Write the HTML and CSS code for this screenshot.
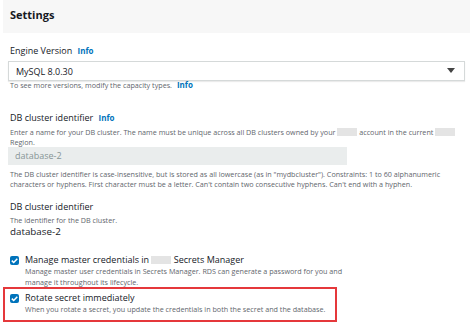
FILE: index.html
```html
<!DOCTYPE html>
<html lang="en">
<head>
  <meta charset="UTF-8" />
  <title>Settings</title>
  <link rel="stylesheet" href="styles.css">
</head>
<body>
  <div class="panel">
    <div class="panel-head"><h2>Settings</h2></div>
    <div class="panel-body">
      <div class="field engine">
        <div class="label">Engine Version <a class="info">Info</a></div>
        <div class="select">
          <span>MySQL 8.0.30</span>
          <svg class="caret" width="8" height="6" viewBox="0 0 8 6"><path d="M0 0h8L4 5z" fill="#444"/></svg>
        </div>
        <div class="hint">To see more versions, modify the capacity types. <a class="info">Info</a></div>
      </div>

      <div class="field cluster">
        <div class="label">DB cluster identifier <a class="info">Info</a></div>
        <div class="desc">Enter a name for your DB cluster. The name must be unique across all DB clusters owned by your <span class="redact"></span> account in the current <span class="redact"></span> Region.</div>
        <div class="input disabled">database-2</div>
        <div class="hint">The DB cluster identifier is case-insensitive, but is stored as all lowercase (as in "mydbcluster"). Constraints: 1 to 60 alphanumeric characters or hyphens. First character must be a letter. Can't contain two consecutive hyphens. Can't end with a hyphen.</div>
      </div>

      <div class="field readonly">
        <div class="label">DB cluster identifier</div>
        <div class="desc">The identifier for the DB cluster.</div>
        <div class="value">database-2</div>
      </div>

      <div class="check manage">
        <span class="box"><svg width="9" height="9" viewBox="0 0 9 9"><path d="M1.8 4.6l1.9 1.9 3.6-3.8" fill="none" stroke="#fff" stroke-width="1.5"/></svg></span>
        <div>
          <div class="check-label">Manage master credentials in <span class="redact"></span> Secrets Manager</div>
          <div class="desc">Manage master user credentials in Secrets Manager. RDS can generate a password for you and manage it throughout its lifecycle.</div>
        </div>
      </div>

      <div class="check rotate">
        <span class="box"><svg width="9" height="9" viewBox="0 0 9 9"><path d="M1.8 4.6l1.9 1.9 3.6-3.8" fill="none" stroke="#fff" stroke-width="1.5"/></svg></span>
        <div>
          <div class="check-label">Rotate secret immediately</div>
          <div class="desc">When you rotate a secret, you update the credentials in both the secret and the database.</div>
        </div>
      </div>
    </div>
  </div>
</body>
</html>
```
FILE: styles.css
```css
* { box-sizing: border-box; margin: 0; padding: 0; }
body {
  background: #fff;
  font-family: 'Open Sans', 'Noto Sans', sans-serif;
  color: #16191f;
  width: 474px; height: 328px;
  overflow: hidden;
}
.panel { padding: 0 4px 0 3px; }
.panel-head {
  background: #f7f7f7;
  height: 33px;
  padding: 7px 7px 0;
}
.panel-head h2 { font-size: 11px; font-weight: 700; line-height: 16px; }
.panel-body { padding: 0 5px 0 5px; }
.label { font-size: 9px; line-height: 12px; color: #16191f; padding-left: 2px; }
.info { color: #0073bb; font-weight: 700; font-size: 8px; margin-left: 3px; }
.desc, .hint {
  font-size: 7.2px; line-height: 10.5px; color: #5f666d; padding-left: 2px;
}
.engine { margin-top: 12px; }
.select {
  margin-top: 4px;
  height: 20px;
  border: 1px solid #d5d9d9;
  display: flex; align-items: center; justify-content: space-between;
  padding: 0 7px 0 7px;
  font-size: 9px;
  box-shadow: 0 1px 1px rgba(0,0,0,0.08);
}
.caret { margin-right: 2px; }
.engine .hint { margin-top: -1px; }
.cluster { margin-top: 21px; }
.cluster .desc { margin-top: 3px; }
.input {
  width: 339px; height: 18px; margin-top: -1px;
  display: flex; align-items: center;
  padding: 0 7px; font-size: 9px;
}
.input.disabled { background: #eaeded; color: #879596; }
.cluster .hint { margin-top: 4px; padding-right: 10px; }
.redact {
  display: inline-block; width: 20px; height: 8px;
  background: #e4e4e4; vertical-align: -1px;
}
.readonly { margin-top: 11px; }
.readonly .desc { margin-top: 2px; }
.value { font-size: 9.8px; line-height: 12px; margin-top: 1px; padding-left: 2px; }
.check { display: flex; gap: 6px; }
.check .box {
  flex: 0 0 9px; width: 9px; height: 9px; margin-top: 2px;
  background: #0073bb; border-radius: 2px;
  display: flex; align-items: center; justify-content: center;
}
.check-label { font-size: 9px; line-height: 12px; }
.check .desc { padding-left: 0; }
.manage { margin-top: 16px; padding-left: 2px; padding-right: 120px; }
.rotate {
  margin: 0 0 0 -5px;
  width: 334px; height: 35px;
  border: 2px solid #e5383b;
  padding: 3px 0 0 5px;
}
```
